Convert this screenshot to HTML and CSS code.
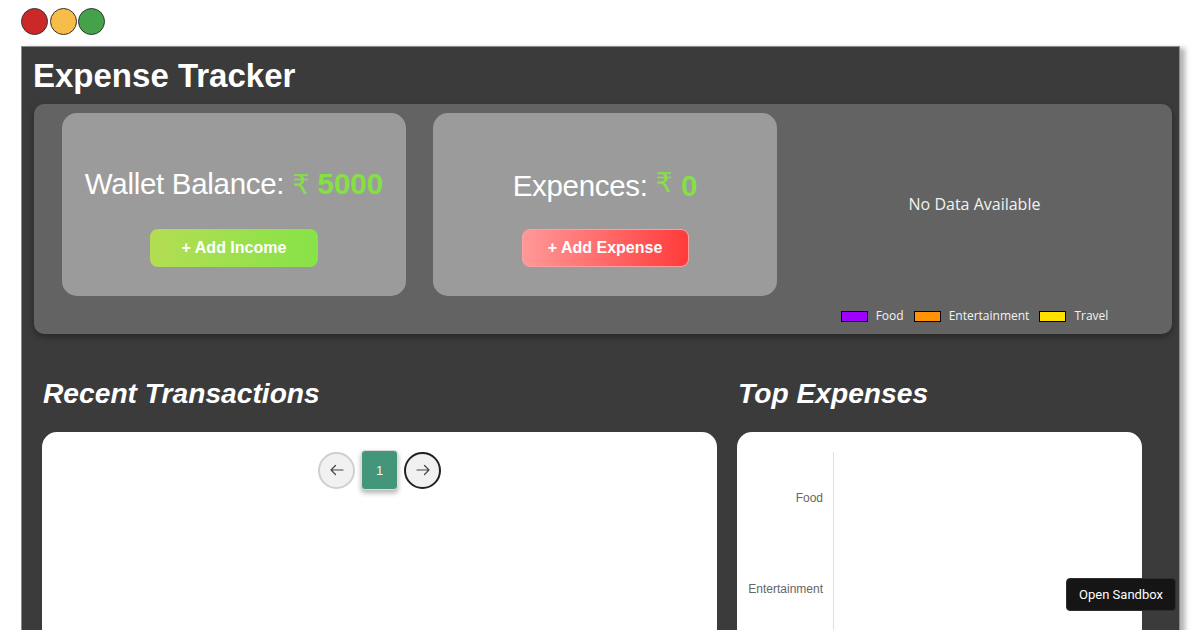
FILE: index.html
```html
<!DOCTYPE html>
<html>
<head>
<meta charset="utf-8">
<link rel="stylesheet" href="styles.css">
</head>
<body>
<div class="dots">
  <span class="dot red"></span><span class="dot yellow"></span><span class="dot green"></span>
</div>
<div class="app">
  <h1 class="title">Expense Tracker</h1>
  <section class="summary">
    <div class="card">
      <div class="amount-line">Wallet Balance: <span class="money"><span class="rupee">₹</span> 5000</span></div>
      <button class="btn btn-income">+ Add Income</button>
    </div>
    <div class="card">
      <div class="amount-line exp-line">Expences: <span class="money"><span class="rupee raised">₹</span> 0</span></div>
      <button class="btn btn-expense">+ Add Expense</button>
    </div>
    <div class="pie">
      <div class="nodata">No Data Available</div>
      <div class="legend">
        <span class="sw purple"></span><span class="lg">Food</span>
        <span class="sw orange"></span><span class="lg">Entertainment</span>
        <span class="sw yellow2"></span><span class="lg">Travel</span>
      </div>
    </div>
  </section>
  <div class="lower">
    <div class="col-left">
      <h2 class="sub">Recent Transactions</h2>
      <div class="panel">
        <div class="pager">
          <button class="pg circ">
            <svg width="18" height="16" viewBox="0 0 18 16"><path d="M15 8H3M7.5 3.5L3 8l4.5 4.5" fill="none" stroke="#444" stroke-width="1.2" stroke-linecap="round" stroke-linejoin="round"/></svg>
          </button>
          <button class="pg num">1</button>
          <button class="pg circ active">
            <svg width="18" height="16" viewBox="0 0 18 16"><path d="M3 8h12M10.5 3.5L15 8l-4.5 4.5" fill="none" stroke="#444" stroke-width="1.2" stroke-linecap="round" stroke-linejoin="round"/></svg>
          </button>
        </div>
      </div>
    </div>
    <div class="col-right">
      <h2 class="sub">Top Expenses</h2>
      <div class="panel bars">
        <div class="ylabels">
          <div class="yl">Food</div>
          <div class="yl">Entertainment</div>
        </div>
        <div class="axis"></div>
      </div>
    </div>
  </div>
</div>
<button class="sandbox">Open Sandbox</button>
</body>
</html>
```
FILE: styles.css
```css
html, body { margin: 0; padding: 0; background: #fff; overflow: hidden; }
body { padding: 8px 0 0 21px; font-family: "Liberation Sans", Arial, sans-serif; }

.dots { display: flex; height: 27px; }
.dot { width: 25px; height: 25px; border-radius: 50%; border: 1px solid #333; margin-right: 1.5px; }
.red { background: #cc2828; }
.yellow { background: #f6bd4b; }
.green { background: #45a24b; }

.app {
  margin-top: 11px;
  width: 1159px;
  height: 640px;
  background: #3b3b3b;
  border: 1px solid #8a8a8a;
  border-bottom: none;
  box-shadow: 5px 2px 5px rgba(0,0,0,0.3);
  padding: 10px 7px 0 12px;
  box-sizing: border-box;
}
.title {
  margin: 0 0 10px -1px;
  font-size: 33px;
  font-weight: bold;
  color: #fff;
  line-height: 37px;
}
.summary {
  display: flex;
  height: 230px;
  background: #636363;
  border-radius: 10px;
  box-shadow: 0 3px 6px rgba(0,0,0,0.35);
  padding: 9px 0 0 28px;
  box-sizing: border-box;
}
.card {
  width: 344px;
  height: 183px;
  background: #9b9b9b;
  border-radius: 15px;
  margin-right: 27px;
  display: flex;
  flex-direction: column;
  align-items: center;
  padding-top: 53px;
  box-sizing: border-box;
}
.amount-line {
  font-size: 29.5px;
  color: #fff;
  line-height: 36px;
  letter-spacing: -0.3px;
  white-space: nowrap;
}
.exp-line { padding-top: 2px; margin-bottom: -2px; }
.money { color: #85e044; font-weight: bold; letter-spacing: 0; }
.rupee { font-weight: normal; font-family: "DejaVu Sans", sans-serif; font-size: 27px; }
.raised { position: relative; top: -4px; }
.btn {
  margin-top: 26px;
  width: 168px;
  height: 38px;
  border-radius: 8px;
  border: none;
  color: #fff;
  font-family: "Liberation Sans", Arial, sans-serif;
  font-weight: bold;
  font-size: 16px;
  padding: 0;
}
.btn-income { background: linear-gradient(90deg, #b4dd54, #87e347); }
.btn-expense { width: 167px; background: linear-gradient(90deg, #ff9898, #ff3b3b); border: 1px solid #ffa0a0; }

.pie {
  flex: 1;
  margin-left: -27px;
  position: relative;
  display: flex;
  flex-direction: column;
  align-items: center;
  font-family: "Open Sans", sans-serif;
  color: #f2f2f2;
}
.nodata { margin-top: 80px; font-size: 16px; line-height: 22px; }
.legend { margin-top: 93px; display: flex; align-items: center; font-size: 12px; line-height: 16px; }
.sw { width: 25px; height: 9px; border: 1px solid #000; margin-right: 8px; }
.lg { margin-right: 10px; }
.lg:last-child { margin-right: 0; }
.purple { background: #a000ff; }
.orange { background: #ff9304; }
.yellow2 { background: #ffe000; }

.lower { display: flex; padding: 43px 0 0 8px; }
.col-left { width: 675px; margin-right: 20px; }
.col-right { width: 405px; }
.sub {
  margin: 0 0 23px 1px;
  font-size: 28.2px;
  font-style: italic;
  font-weight: bold;
  color: #fff;
  line-height: 32px;
}
.panel {
  background: #fff;
  border-radius: 15px;
  height: 260px;
}
.pager { display: flex; justify-content: center; align-items: center; padding-top: 18px; gap: 6px; }
.pg { padding: 0; display: flex; align-items: center; justify-content: center; }
.circ {
  width: 37px; height: 37px; border-radius: 50%;
  background: #f1f1f1; border: 2px solid #cfcfcf;
}
.circ.active { border-color: #222; }
.num {
  width: 37px; height: 40px; border-radius: 4px;
  background: #43967a; border: 1px solid #dcdcdc;
  color: #f0f0f0; font-family: "Liberation Sans", Arial, sans-serif; font-size: 13px;
  box-shadow: 0 3px 5px rgba(0,0,0,0.3);
}
.bars { display: flex; padding-top: 20px; box-sizing: border-box; }
.ylabels { width: 86px; text-align: right; font-size: 12px; color: #666; padding-top: 39px; }
.yl { height: 91px; line-height: 14px; }
.axis { width: 1px; background: #e0e0e0; margin-left: 10px; height: 240px; }

.sandbox {
  position: fixed;
  left: 1066px;
  top: 578px;
  width: 110px;
  height: 33px;
  background: #151515;
  border: 1px solid #2e2e2e;
  border-radius: 4px;
  color: #fff;
  font-family: Roboto, "Liberation Sans", sans-serif;
  font-size: 13px;
  padding: 0;
}
```
